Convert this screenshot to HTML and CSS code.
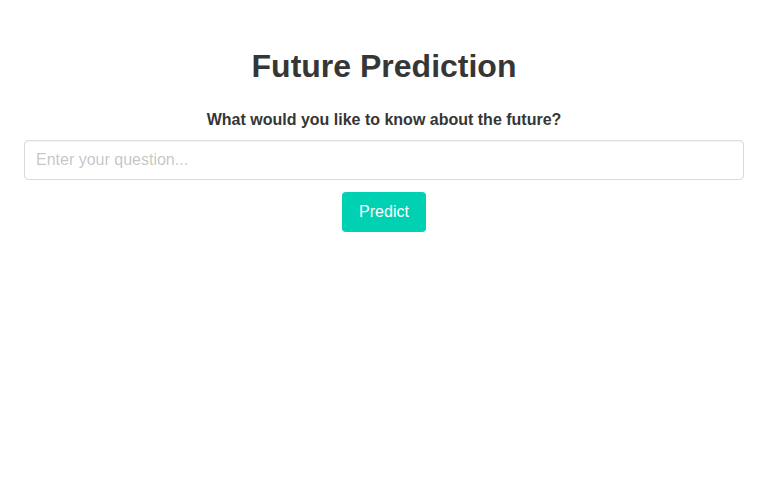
FILE: index.html
```html
<!DOCTYPE html>
<html lang="en">
<head>
<meta charset="utf-8">
<title>Future Prediction</title>
<link rel="stylesheet" href="styles.css">
</head>
<body>
  <main class="page">
    <h1 class="title">Future Prediction</h1>
    <form class="ask">
      <label class="ask-label" for="question">What would you like to know about the future?</label>
      <input class="ask-input" id="question" type="text" placeholder="Enter your question...">
      <button class="ask-button" type="button">Predict</button>
    </form>
  </main>
</body>
</html>
```
FILE: styles.css
```css
html, body {
  margin: 0;
  padding: 0;
  background: #ffffff;
}

body {
  font-family: "Liberation Sans", Arial, sans-serif;
  color: #363636;
}

.page {
  padding: 48px 24px 0;
  display: flex;
  flex-direction: column;
  align-items: center;
}

.title {
  margin: 0;
  font-size: 32px;
  font-weight: 700;
  line-height: 37px;
  color: #363636;
}

.ask {
  margin-top: 26px;
  width: 100%;
  display: flex;
  flex-direction: column;
  align-items: center;
}

.ask-label {
  font-size: 16px;
  font-weight: 700;
  line-height: 18px;
  margin-bottom: 11px;
}

.ask-input {
  box-sizing: border-box;
  width: 100%;
  height: 40px;
  padding: 0 11px;
  border: 1px solid #dbdbdb;
  border-radius: 4px;
  font-family: inherit;
  font-size: 16px;
  color: #363636;
  outline: none;
  box-shadow: inset 0 1px 2px rgba(10, 10, 10, 0.05);
}

.ask-input::placeholder {
  color: rgba(54, 54, 54, 0.3);
}

.ask-button {
  margin-top: 12px;
  box-sizing: border-box;
  height: 40px;
  padding: 0 16px;
  border: 1px solid transparent;
  border-radius: 4px;
  background: #00d1b2;
  color: #ffffff;
  font-family: inherit;
  font-size: 16px;
  cursor: pointer;
}
```
